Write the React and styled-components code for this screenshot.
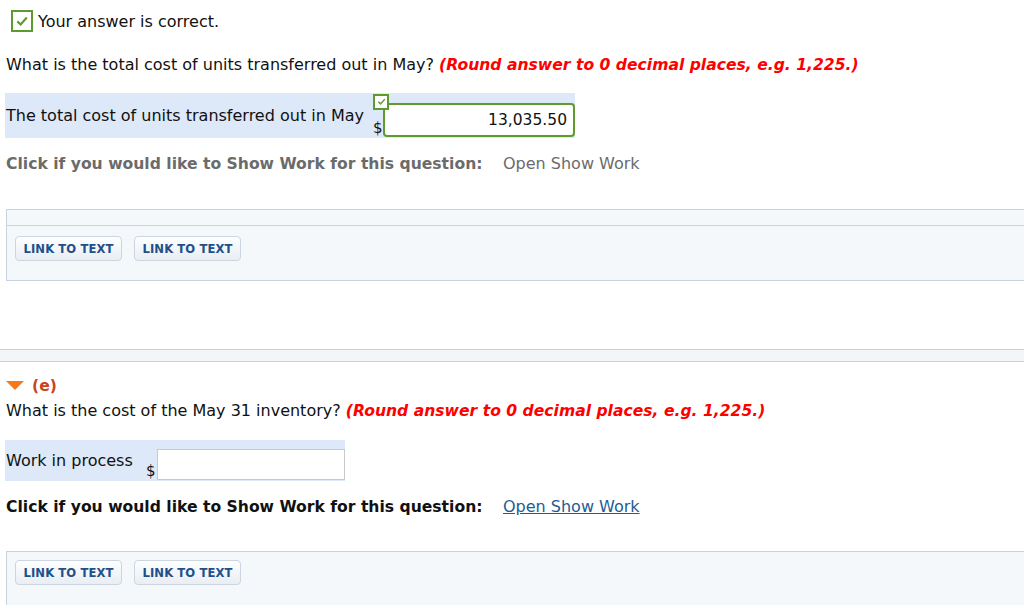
import React from "react";
import styled, { createGlobalStyle } from "styled-components";

const Global = createGlobalStyle`
  html, body { margin: 0; padding: 0; background: #fff; }
  body { font-family: "DejaVu Sans", Verdana, sans-serif; font-size: 16px; color: #111; overflow: hidden; }
`;

const Page = styled.div`
  width: 1024px;
  height: 605px;
  overflow: hidden;
`;

const Section = styled.div`
  padding-left: ${(p) => p.$pl || 6}px;
`;

const CorrectRow = styled.div`
  display: flex;
  align-items: center;
  gap: 5px;
  padding: 10px 0 0 11px;
  height: 22px;
`;

const CheckBox = styled.span`
  box-sizing: border-box;
  width: ${(p) => p.$size}px;
  height: ${(p) => p.$size}px;
  border: ${(p) => p.$bw}px solid #5f9a2c;
  background: #fff;
  display: inline-flex;
  align-items: center;
  justify-content: center;
  flex: none;
`;

const Question = styled.div`
  margin-top: ${(p) => p.$mt}px;
  line-height: 20px;
  font-size: 16px;
`;

const Hint = styled.span`
  color: #f00;
  font-weight: bold;
  font-style: italic;
  font-size: 15.6px;
`;

const Band = styled.div`
  display: flex;
  align-items: stretch;
  background: #dde8f8;
  width: fit-content;
  margin-left: 5px;
  margin-top: ${(p) => p.$mt}px;
  height: ${(p) => p.$h}px;
`;

const BandLabel = styled.div`
  display: flex;
  align-items: center;
  padding-left: 1px;
  width: ${(p) => p.$w}px;
`;

const AnswerCell = styled.div`
  position: relative;
  display: flex;
  align-items: flex-end;
  padding-bottom: 1px;
`;

const Dollar = styled.span`
  width: ${(p) => p.$w}px;
  line-height: 16px;
  padding-bottom: 1px;
  font-size: 15px;
`;

const Input = styled.div`
  box-sizing: border-box;
  width: ${(p) => p.$w}px;
  height: ${(p) => p.$h}px;
  background: #fff;
  border: ${(p) => (p.$ok ? "2px solid #5f9a2c" : "1px solid #c9c9c9")};
  border-radius: ${(p) => (p.$ok ? 4 : 0)}px;
  display: flex;
  align-items: center;
  justify-content: flex-end;
  padding-right: 6px;
  font-size: 15.5px;
  color: #111;
`;

const Badge = styled.span`
  position: absolute;
  left: 0;
  top: -1px;
`;

const ShowWork = styled.div`
  margin-top: ${(p) => p.$mt}px;
  display: flex;
  line-height: 20px;
`;

const ShowLabel = styled.span`
  font-weight: bold;
  font-size: 15.6px;
  color: ${(p) => (p.$muted ? "#6b6b6b" : "#111")};
  width: 497px;
`;

const ShowLink = styled.span`
  font-size: 16px;
  color: ${(p) => (p.$muted ? "#6b6b6b" : "#1d5d93")};
  text-decoration: ${(p) => (p.$muted ? "none" : "underline")};
`;

const Panel = styled.div`
  margin: ${(p) => p.$mt}px 0 0 6px;
  border: 1px solid #c9d3dd;
  border-right: none;
  background: #f5f8fb;
`;

const PanelTop = styled.div`
  height: 15px;
  border-bottom: 1px solid #c9d3dd;
`;

const PanelBody = styled.div`
  display: flex;
  gap: 12px;
  padding: ${(p) => p.$pad};
`;

const LinkButton = styled.button`
  box-sizing: border-box;
  width: ${(p) => p.$w}px;
  height: 25px;
  border: 1px solid #cdd6e0;
  border-radius: 4px;
  background: linear-gradient(#fdfeff, #e9eef4);
  color: #214f8a;
  font-family: "DejaVu Sans", Verdana, sans-serif;
  font-weight: bold;
  font-size: 11.6px;
  letter-spacing: 0.1px;
  padding: 0;
`;

const Separator = styled.div`
  margin-top: 68px;
  height: 11px;
  background: #f3f6f9;
  border-top: 1px solid #c9d1da;
  border-bottom: 1px solid #c9d1da;
`;

const PartHead = styled.div`
  margin-top: 14px;
  display: flex;
  align-items: center;
  gap: 8px;
  color: #c8461a;
  font-weight: bold;
  font-size: 15.6px;
  line-height: 20px;
`;

const Check = ({ size }) => (
  <svg width={size} height={size} viewBox="0 0 12 12">
    <path d="M2.5 6.3 L5 8.6 L9.6 3.4" fill="none" stroke="#5f9a2c" strokeWidth="1.6" />
  </svg>
);

const Buttons = ({ pad }) => (
  <PanelBody $pad={pad}>
    <LinkButton $w={107}>LINK TO TEXT</LinkButton>
    <LinkButton $w={107}>LINK TO TEXT</LinkButton>
  </PanelBody>
);

export default function App() {
  return (
    <Page>
      <Global />
      <CorrectRow>
        <CheckBox $size={22} $bw={2}>
          <Check size={16} />
        </CheckBox>
        <span>Your answer is correct.</span>
      </CorrectRow>
      <Section>
        <Question $mt={23}>
          What is the total cost of units transferred out in May? <Hint>(Round answer to 0 decimal places, e.g. 1,225.)</Hint>
        </Question>
      </Section>
      <Band $mt={18} $h={45}>
        <BandLabel $w={367}>The total cost of units transferred out in May</BandLabel>
        <AnswerCell>
          <Dollar $w={10}>$</Dollar>
          <Input $w={192} $h={34} $ok>13,035.50</Input>
          <Badge>
            <CheckBox $size={16} $bw={2}>
              <Check size={11} />
            </CheckBox>
          </Badge>
        </AnswerCell>
      </Band>
      <Section>
        <ShowWork $mt={16}>
          <ShowLabel $muted>Click if you would like to Show Work for this question:</ShowLabel>
          <ShowLink $muted>Open Show Work</ShowLink>
        </ShowWork>
      </Section>
      <Panel $mt={35}>
        <PanelTop />
        <Buttons pad="10px 0 19px 8px" />
      </Panel>
      <Separator />
      <Section>
        <PartHead>
          <svg width="18" height="10" viewBox="0 0 18 10">
            <path d="M0 0 H18 L9 9 Z" fill="#f47a20" />
          </svg>
          <span>(e)</span>
        </PartHead>
        <Question $mt={5}>
          What is the cost of the May 31 inventory? <Hint>(Round answer to 0 decimal places, e.g. 1,225.)</Hint>
        </Question>
      </Section>
      <Band $mt={19} $h={41}>
        <BandLabel $w={140}>Work in process</BandLabel>
        <AnswerCell>
          <Dollar $w={11}>$</Dollar>
          <Input $w={188} $h={31} />
        </AnswerCell>
      </Band>
      <Section>
        <ShowWork $mt={16}>
          <ShowLabel>Click if you would like to Show Work for this question:</ShowLabel>
          <ShowLink>Open Show Work</ShowLink>
        </ShowWork>
      </Section>
      <Panel $mt={34}>
        <Buttons pad="8px 0 20px 8px" />
      </Panel>
    </Page>
  );
}
